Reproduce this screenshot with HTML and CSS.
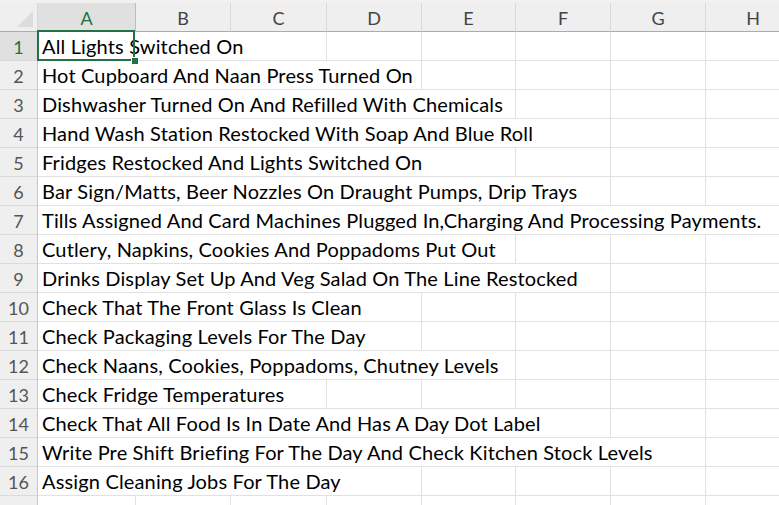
FILE: index.html
```html
<!DOCTYPE html>
<html>
<head>
<meta charset="utf-8">
<link rel="stylesheet" href="styles.css">
</head>
<body>
<div class="topstrip"></div>
<div class="sheet">
  <div class="corner"><div class="tri"></div></div>
  <div class="colhead sel">A</div>
  <div class="colhead">B</div>
  <div class="colhead">C</div>
  <div class="colhead">D</div>
  <div class="colhead">E</div>
  <div class="colhead">F</div>
  <div class="colhead">G</div>
  <div class="colhead last">H</div>

  <div class="rowhead sel">1</div>
  <div class="cell text span3 active">All Lights Switched On<span class="handle"></span></div>
  <div class="cell"></div><div class="cell"></div><div class="cell"></div><div class="cell"></div><div class="cell last"></div>

  <div class="rowhead">2</div>
  <div class="cell text span4">Hot Cupboard And Naan Press Turned On</div>
  <div class="cell"></div><div class="cell"></div><div class="cell"></div><div class="cell last"></div>

  <div class="rowhead">3</div>
  <div class="cell text span5">Dishwasher Turned On And Refilled With Chemicals</div>
  <div class="cell"></div><div class="cell"></div><div class="cell last"></div>

  <div class="rowhead">4</div>
  <div class="cell text span6">Hand Wash Station Restocked With Soap And Blue Roll</div>
  <div class="cell"></div><div class="cell last"></div>

  <div class="rowhead">5</div>
  <div class="cell text span5">Fridges Restocked And Lights Switched On</div>
  <div class="cell"></div><div class="cell"></div><div class="cell last"></div>

  <div class="rowhead">6</div>
  <div class="cell text span6">Bar Sign/Matts, Beer Nozzles On Draught Pumps, Drip Trays</div>
  <div class="cell"></div><div class="cell last"></div>

  <div class="rowhead">7</div>
  <div class="cell text span8">Tills Assigned And Card Machines Plugged In,Charging And Processing Payments.</div>

  <div class="rowhead">8</div>
  <div class="cell text span5">Cutlery, Napkins, Cookies And Poppadoms Put Out</div>
  <div class="cell"></div><div class="cell"></div><div class="cell last"></div>

  <div class="rowhead">9</div>
  <div class="cell text span6">Drinks Display Set Up And Veg Salad On The Line Restocked</div>
  <div class="cell"></div><div class="cell last"></div>

  <div class="rowhead">10</div>
  <div class="cell text span4">Check That The Front Glass Is Clean</div>
  <div class="cell"></div><div class="cell"></div><div class="cell"></div><div class="cell last"></div>

  <div class="rowhead">11</div>
  <div class="cell text span4">Check Packaging Levels For The Day</div>
  <div class="cell"></div><div class="cell"></div><div class="cell"></div><div class="cell last"></div>

  <div class="rowhead">12</div>
  <div class="cell text span5">Check Naans, Cookies, Poppadoms, Chutney Levels</div>
  <div class="cell"></div><div class="cell"></div><div class="cell last"></div>

  <div class="rowhead">13</div>
  <div class="cell text span3">Check Fridge Temperatures</div>
  <div class="cell"></div><div class="cell"></div><div class="cell"></div><div class="cell"></div><div class="cell last"></div>

  <div class="rowhead">14</div>
  <div class="cell text span6">Check That All Food Is In Date And Has A Day Dot Label</div>
  <div class="cell"></div><div class="cell last"></div>

  <div class="rowhead">15</div>
  <div class="cell text span7">Write Pre Shift Briefing For The Day And Check Kitchen Stock Levels</div>
  <div class="cell last"></div>

  <div class="rowhead">16</div>
  <div class="cell text span4">Assign Cleaning Jobs For The Day</div>
  <div class="cell"></div><div class="cell"></div><div class="cell"></div><div class="cell last"></div>

  <div class="rowhead"></div>
  <div class="cell"></div><div class="cell"></div><div class="cell"></div><div class="cell"></div><div class="cell"></div><div class="cell"></div><div class="cell"></div><div class="cell last"></div>
</div>
</body>
</html>
```
FILE: styles.css
```css
html, body {
  margin: 0;
  padding: 0;
  background: #ffffff;
  overflow: hidden;
  width: 779px;
  height: 505px;
}

.topstrip {
  height: 3px;
  background: #f3f0ee;
}

.sheet {
  display: grid;
  grid-template-columns: 38px 98px 95px 96px 95px 94px 95px 95px 95px;
  grid-template-rows: 29px repeat(17, 29px);
  font-family: "Lato", "Liberation Sans", sans-serif;
}

.corner {
  background: #efefef;
  border-right: 1px solid #d9d9d9;
  border-bottom: 1px solid #ababab;
  position: relative;
}

.tri {
  position: absolute;
  right: 4px;
  bottom: 4px;
  width: 0;
  height: 0;
  border-left: 16px solid transparent;
  border-bottom: 16px solid #dcdcdc;
}

.colhead {
  background: #efefef;
  border-right: 1px solid #d8d8d8;
  border-bottom: 1px solid #ababab;
  color: #444444;
  font-size: 18px;
  display: flex;
  align-items: center;
  justify-content: center;
  padding-top: 1px;
}

.colhead.sel {
  background: #e0e0e0;
  color: #1e7145;
  border-right-color: #bdbdbd;
}

.rowhead {
  background: #efefef;
  border-right: 1px solid #c8c8c8;
  border-bottom: 1px solid #dadada;
  color: #555555;
  font-size: 18px;
  display: flex;
  align-items: center;
  justify-content: center;
  padding-top: 1px;
}

.rowhead.sel {
  background: #e0e0e0;
  color: #1e7145;
}

.cell {
  border-right: 1px solid #e1e1e1;
  border-bottom: 1px solid #e1e1e1;
}

.text {
  font-size: 20px;
  letter-spacing: 0.15px;
  color: #000000;
  white-space: nowrap;
  padding-left: 4px;
  display: flex;
  align-items: flex-end;
  padding-bottom: 2px;
  box-sizing: border-box;
}

.span3 { grid-column: span 3; }
.span4 { grid-column: span 4; }
.span5 { grid-column: span 5; }
.span6 { grid-column: span 6; }
.span7 { grid-column: span 7; }
.span8 { grid-column: span 8; }

.active {
  position: relative;
}

.active::before {
  content: "";
  position: absolute;
  left: -1px;
  top: -2px;
  width: 98px;
  height: 31px;
  border: 2px solid #217346;
  box-sizing: border-box;
}

.handle {
  position: absolute;
  left: 93px;
  top: 25px;
  width: 6px;
  height: 6px;
  background: #217346;
  border: 1px solid #ffffff;
}
```
